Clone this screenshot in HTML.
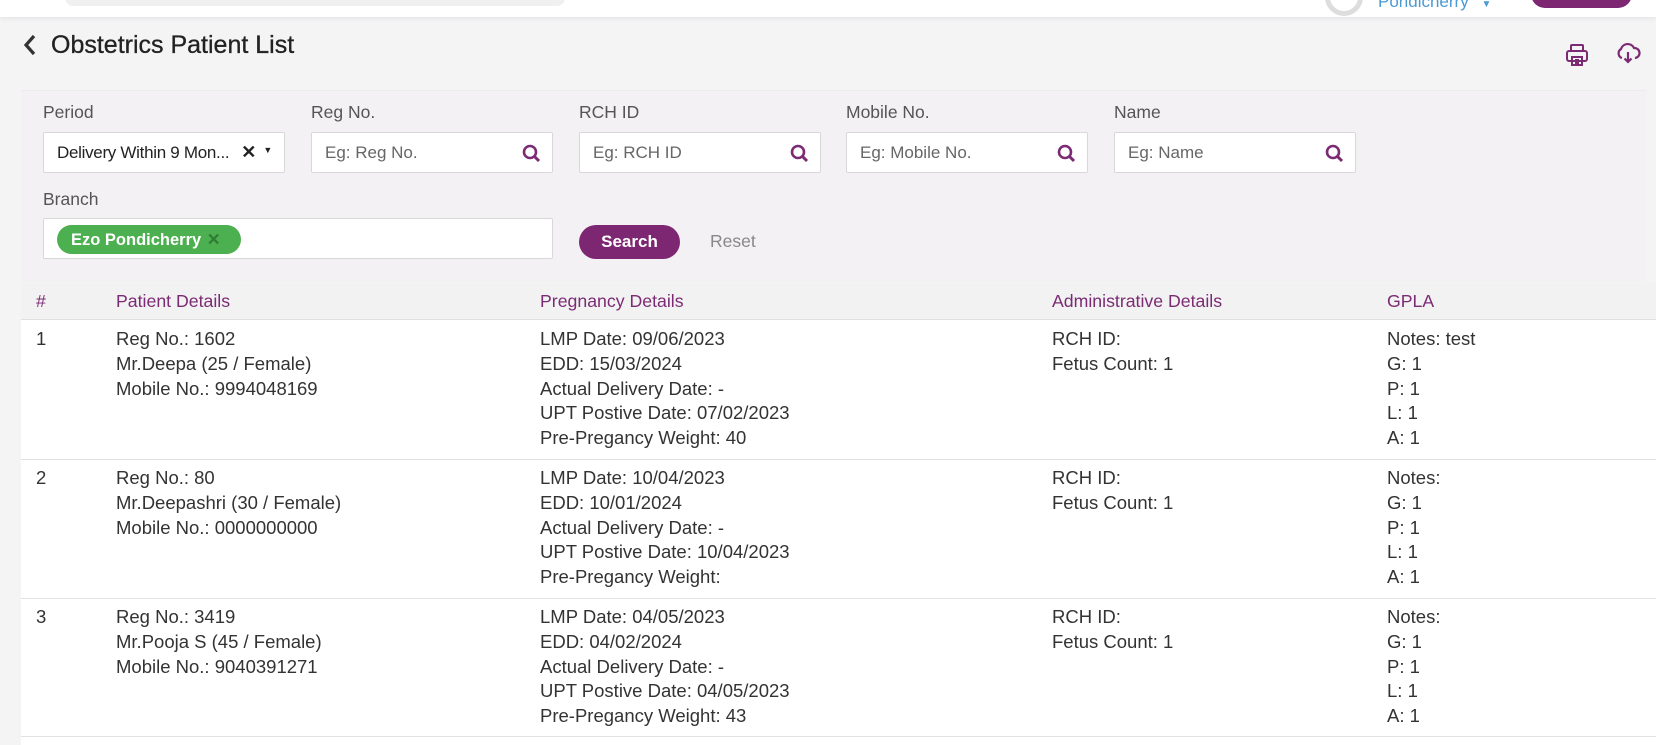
<!DOCTYPE html>
<html><head><meta charset="utf-8"><style>
*{box-sizing:border-box;margin:0;padding:0}
body{width:1656px;height:745px;overflow:hidden;background:#f4f4f5;font-family:"Liberation Sans",sans-serif;color:#333;position:relative}
.abs{position:absolute}
.top{left:0;top:0;width:1656px;height:17px;background:#fff;box-shadow:0 2px 4px rgba(0,0,0,.06)}
.topsearch{left:65px;top:-20px;width:500px;height:26px;background:#f0f0f0;border-radius:8px}
.title{left:51px;top:31px;font-size:25px;color:#222;font-weight:500;-webkit-text-stroke:0.3px #222}
.panel{left:21px;top:90px;width:1625px;height:192px;background:#f3f1f4;border-top:1px solid #ececec}
.lbl{font-size:17.5px;color:#555}
.inp{height:41px;width:242px;background:#fff;border:1px solid #d8d8d8;border-radius:2px;font-size:17px;color:#666;padding:10px 13px}
.inp svg{position:absolute;right:10px;top:11px}
.tbl{left:21px;top:283px;width:1635px;height:462px;background:#fff}
.th{left:21px;top:283px;width:1635px;height:37px;background:#f2f2f2;border-bottom:1px solid #e0e0e0}
.h{font-size:17.7px;color:#7b2a74;top:291px}
.c{font-size:18.5px;line-height:24.8px;color:#333}
.rl{left:21px;width:1635px;height:1px;background:#e2e2e2}
</style></head><body>
<div class="abs top"></div>
<div class="abs topsearch"></div>
<div class="abs" style="left:1325px;top:-22px;width:38px;height:38px;border:5px solid #ddd;border-radius:50%"></div>
<div class="abs" style="left:1378px;top:-8px;font-size:17px;color:#4a9ad4">Pondicherry <span style="font-size:10px;margin-left:8px">▼</span></div>
<div class="abs" style="left:1531px;top:-20px;width:101px;height:28px;background:#7d2672;border-radius:14px"></div>

<svg class="abs" style="left:23px;top:34px" width="14" height="22" viewBox="0 0 14 22"><path d="M11 2 L3 11 L11 20" fill="none" stroke="#333" stroke-width="3.2"/></svg>
<div class="abs title">Obstetrics Patient List</div>
<svg class="abs" style="left:1564px;top:42px" width="26" height="26" viewBox="0 0 26 26" fill="none" stroke="#7b2a74" stroke-width="2"><rect x="7" y="3" width="12" height="6" rx="1"/><rect x="3" y="9" width="20" height="10" rx="2"/><rect x="8" y="15" width="10" height="8"/><path d="M11 18h4M11 21h4"/></svg>
<svg class="abs" style="left:1615px;top:42px" width="26" height="24" viewBox="0 0 26 24" fill="none" stroke="#7b2a74" stroke-width="2.2"><path d="M7 16 A5 5 0 0 1 6 7 A7 7 0 0 1 19 6 A5 5 0 0 1 20 16"/><path d="M13 10v10M9.5 16.5l3.5 3.5 3.5-3.5"/></svg>

<div class="abs panel"></div>
<div class="abs lbl" style="left:43px;top:102px">Period</div>
<div class="abs lbl" style="left:311px;top:102px">Reg No.</div>
<div class="abs lbl" style="left:579px;top:102px">RCH ID</div>
<div class="abs lbl" style="left:846px;top:102px">Mobile No.</div>
<div class="abs lbl" style="left:1114px;top:102px">Name</div>
<div class="abs inp" style="left:43px;top:132px;color:#222;letter-spacing:-0.3px">Delivery Within 9 Mon...<span style="position:absolute;right:28px;top:9px;font-size:18px;font-weight:bold">✕</span><span style="position:absolute;right:12px;top:12px;font-size:9px">▼</span></div>
<div class="abs inp" style="left:311px;top:132px">Eg: Reg No.<svg width="20" height="20" viewBox="0 0 20 20"><circle cx="8" cy="8" r="6" fill="none" stroke="#7b2a74" stroke-width="2.6"/><path d="M12.5 12.5 17 17" stroke="#7b2a74" stroke-width="3"/></svg></div>
<div class="abs inp" style="left:579px;top:132px">Eg: RCH ID<svg width="20" height="20" viewBox="0 0 20 20"><circle cx="8" cy="8" r="6" fill="none" stroke="#7b2a74" stroke-width="2.6"/><path d="M12.5 12.5 17 17" stroke="#7b2a74" stroke-width="3"/></svg></div>
<div class="abs inp" style="left:846px;top:132px">Eg: Mobile No.<svg width="20" height="20" viewBox="0 0 20 20"><circle cx="8" cy="8" r="6" fill="none" stroke="#7b2a74" stroke-width="2.6"/><path d="M12.5 12.5 17 17" stroke="#7b2a74" stroke-width="3"/></svg></div>
<div class="abs inp" style="left:1114px;top:132px">Eg: Name<svg width="20" height="20" viewBox="0 0 20 20"><circle cx="8" cy="8" r="6" fill="none" stroke="#7b2a74" stroke-width="2.6"/><path d="M12.5 12.5 17 17" stroke="#7b2a74" stroke-width="3"/></svg></div>
<div class="abs lbl" style="left:43px;top:189px">Branch</div>
<div class="abs inp" style="left:43px;top:218px;width:510px"></div>
<div class="abs" style="left:57px;top:225px;width:184px;height:29px;background:#4caf50;border-radius:15px;color:#fff;font-size:16.5px;font-weight:bold;padding:5px 14px;white-space:nowrap">Ezo Pondicherry <span style="color:#2e7d32;margin-left:1px">✕</span></div>
<div class="abs" style="left:579px;top:225px;width:101px;height:34px;background:#7d2672;border-radius:17px;color:#fff;font-size:17px;font-weight:bold;text-align:center;line-height:34px">Search</div>
<div class="abs" style="left:710px;top:231px;font-size:17.5px;color:#888">Reset</div>

<div class="abs tbl"></div>
<div class="abs th"></div>
<div class="abs h" style="left:36px">#</div>
<div class="abs h" style="left:116px">Patient Details</div>
<div class="abs h" style="left:540px">Pregnancy Details</div>
<div class="abs h" style="left:1052px">Administrative Details</div>
<div class="abs h" style="left:1387px">GPLA</div>

<div class="abs c" style="left:36px;top:327px">1</div>
<div class="abs c" style="left:116px;top:327px">Reg No.: 1602<br>Mr.Deepa (25 / Female)<br>Mobile No.: 9994048169</div>
<div class="abs c" style="left:540px;top:327px">LMP Date: 09/06/2023<br>EDD: 15/03/2024<br>Actual Delivery Date: -<br>UPT Postive Date: 07/02/2023<br>Pre-Pregancy Weight: 40</div>
<div class="abs c" style="left:1052px;top:327px">RCH ID:<br>Fetus Count: 1</div>
<div class="abs c" style="left:1387px;top:327px">Notes: test<br>G: 1<br>P: 1<br>L: 1<br>A: 1</div>
<div class="abs rl" style="top:459px"></div>

<div class="abs c" style="left:36px;top:466px">2</div>
<div class="abs c" style="left:116px;top:466px">Reg No.: 80<br>Mr.Deepashri (30 / Female)<br>Mobile No.: 0000000000</div>
<div class="abs c" style="left:540px;top:466px">LMP Date: 10/04/2023<br>EDD: 10/01/2024<br>Actual Delivery Date: -<br>UPT Postive Date: 10/04/2023<br>Pre-Pregancy Weight:</div>
<div class="abs c" style="left:1052px;top:466px">RCH ID:<br>Fetus Count: 1</div>
<div class="abs c" style="left:1387px;top:466px">Notes:<br>G: 1<br>P: 1<br>L: 1<br>A: 1</div>
<div class="abs rl" style="top:598px"></div>

<div class="abs c" style="left:36px;top:605px">3</div>
<div class="abs c" style="left:116px;top:605px">Reg No.: 3419<br>Mr.Pooja S (45 / Female)<br>Mobile No.: 9040391271</div>
<div class="abs c" style="left:540px;top:605px">LMP Date: 04/05/2023<br>EDD: 04/02/2024<br>Actual Delivery Date: -<br>UPT Postive Date: 04/05/2023<br>Pre-Pregancy Weight: 43</div>
<div class="abs c" style="left:1052px;top:605px">RCH ID:<br>Fetus Count: 1</div>
<div class="abs c" style="left:1387px;top:605px">Notes:<br>G: 1<br>P: 1<br>L: 1<br>A: 1</div>
<div class="abs rl" style="top:736px"></div>
</body></html>
